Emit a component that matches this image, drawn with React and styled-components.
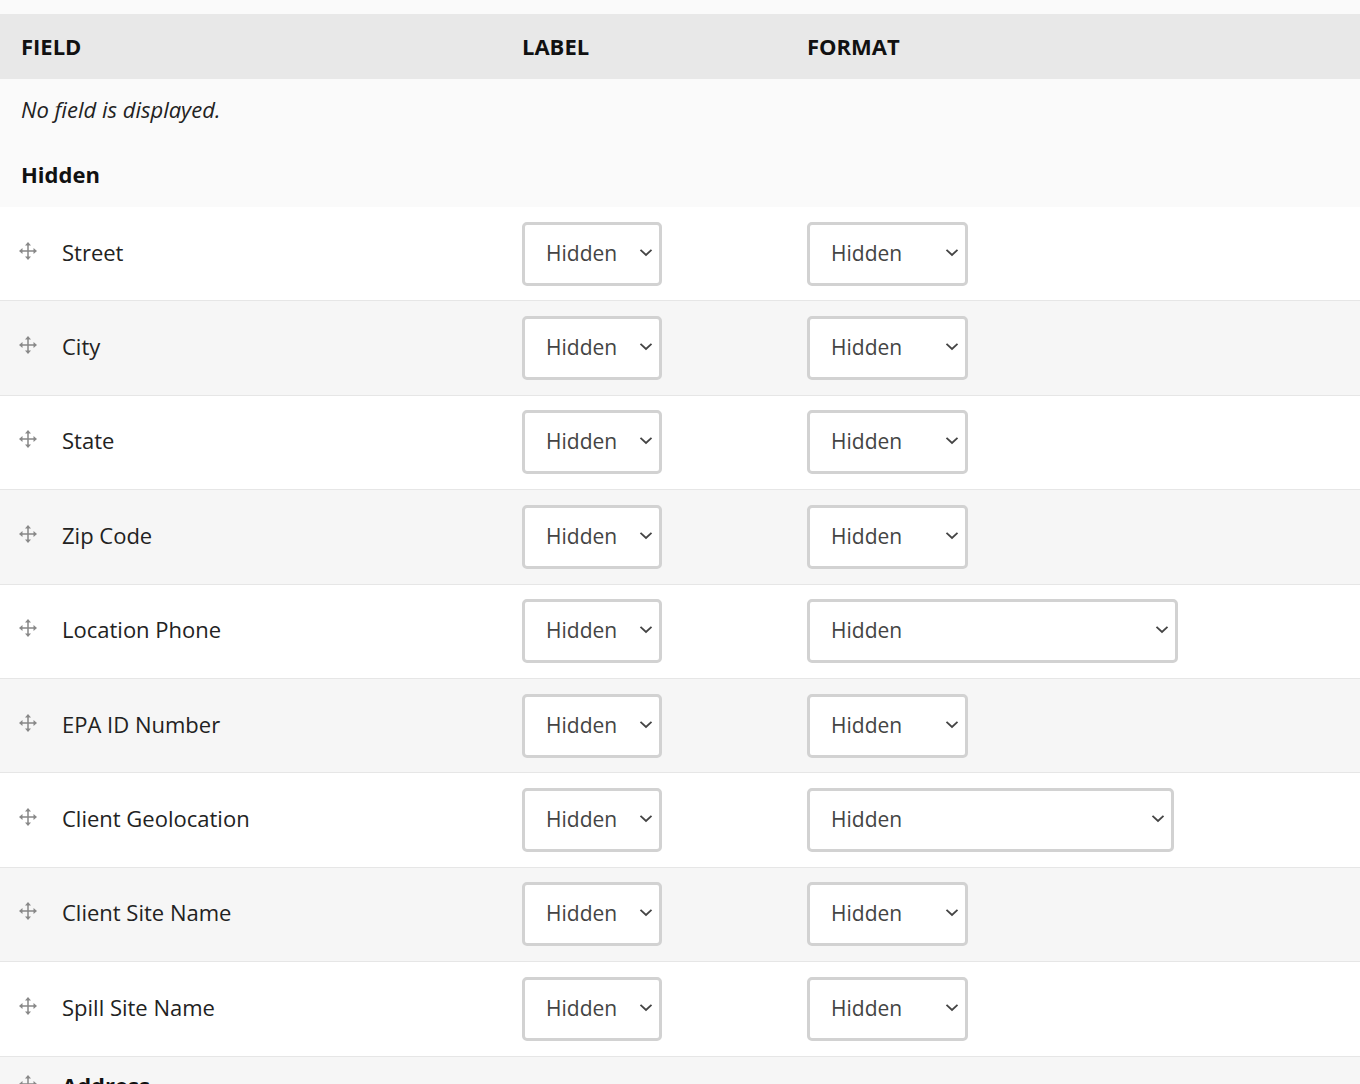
import React from "react";
import styled, { createGlobalStyle } from "styled-components";

const GlobalStyle = createGlobalStyle`
  html, body {
    margin: 0;
    padding: 0;
    background: #fafafa;
  }
  body {
    font-family: "Open Sans", "Noto Sans", sans-serif;
    color: #222;
  }
`;

const Page = styled.div`
  padding-top: 14px;
  height: 1084px;
  overflow: hidden;
  box-sizing: border-box;
`;

const Grid = styled.div`
  display: grid;
  grid-template-columns: 522px 285px 1fr;
`;

const HeaderRow = styled(Grid)`
  height: 65px;
  align-items: center;
  background: #e8e8e8;
`;

const HeaderCell = styled.div`
  font-size: 22px;
  font-weight: 700;
  color: #111;
  margin-top: -2px;
  padding-left: ${(p) => (p.first ? "21px" : "0")};
`;

const Region = styled.div`
  background: #fafafa;
  padding: 13px 21px 16px;
`;

const Empty = styled.div`
  font-size: 22px;
  font-style: italic;
  color: #222;
  line-height: 34px;
`;

const RegionTitle = styled.div`
  font-size: 22px;
  font-weight: 700;
  color: #111;
  line-height: 34px;
  margin-top: 31px;
`;

const Row = styled(Grid)`
  height: 94.4px;
  box-sizing: border-box;
  align-items: ${(p) => (p.group ? "start" : "center")};
  padding-top: ${(p) => (p.group ? "17px" : "0")};
  background: ${(p) => (p.striped ? "#f6f6f6" : "#fff")};
  border-bottom: 1px solid #e6e6e6;
`;

const FieldCell = styled.div`
  display: flex;
  align-items: center;
  gap: 25px;
  padding-left: 19px;
  font-size: 22px;
  line-height: 30px;
  font-weight: ${(p) => (p.bold ? 700 : 400)};
  color: ${(p) => (p.bold ? "#111" : "#222")};
  margin-top: -4px;
`;

const Handle = styled.svg`
  width: 18px;
  height: 18px;
  flex-shrink: 0;
  margin-top: -2px;
`;

const SelectWrap = styled.div`
  position: relative;
  width: ${(p) => p.width}px;
  height: 64px;
`;

const Select = styled.select`
  appearance: none;
  width: 100%;
  height: 100%;
  box-sizing: border-box;
  border: 3px solid #d2d2d2;
  border-radius: 5px;
  background: #fff;
  padding: 0 0 2px 21px;
  font-family: "Open Sans", "Noto Sans", sans-serif;
  font-size: 21px;
  color: #444;
  outline: none;
`;

const Chevron = styled.svg`
  position: absolute;
  right: 9px;
  top: 26px;
  width: 14px;
  height: 9px;
  pointer-events: none;
`;

function DragHandle() {
  return (
    <Handle viewBox="0 0 18 18" fill="#888">
      <rect x="8.25" y="2" width="1.5" height="14" />
      <rect x="2" y="8.25" width="14" height="1.5" />
      <path d="M9 0 L12 3.5 H6 Z" />
      <path d="M9 18 L12 14.5 H6 Z" />
      <path d="M0 9 L3.5 6 V12 Z" />
      <path d="M18 9 L14.5 6 V12 Z" />
    </Handle>
  );
}

function HiddenSelect({ width }) {
  return (
    <SelectWrap width={width}>
      <Select defaultValue="hidden">
        <option value="hidden">Hidden</option>
      </Select>
      <Chevron viewBox="0 0 14 9">
        <path d="M1.5 1.8 L7 7 L12.5 1.8" fill="none" stroke="#444" strokeWidth="1.8" />
      </Chevron>
    </SelectWrap>
  );
}

const fields = [
  { name: "Street", format: 161 },
  { name: "City", format: 161 },
  { name: "State", format: 161 },
  { name: "Zip Code", format: 161 },
  { name: "Location Phone", format: 371 },
  { name: "EPA ID Number", format: 161 },
  { name: "Client Geolocation", format: 367 },
  { name: "Client Site Name", format: 161 },
  { name: "Spill Site Name", format: 161 },
];

function App() {
  return (
    <Page>
      <GlobalStyle />
      <HeaderRow>
        <HeaderCell first>FIELD</HeaderCell>
        <HeaderCell>LABEL</HeaderCell>
        <HeaderCell>FORMAT</HeaderCell>
      </HeaderRow>
      <Region>
        <Empty>No field is displayed.</Empty>
        <RegionTitle>Hidden</RegionTitle>
      </Region>
      {fields.map((f, i) => (
        <Row key={f.name} striped={i % 2 === 1}>
          <FieldCell>
            <DragHandle />
            {f.name}
          </FieldCell>
          <div>
            <HiddenSelect width={140} />
          </div>
          <div>
            <HiddenSelect width={f.format} />
          </div>
        </Row>
      ))}
      <Row striped group>
        <FieldCell bold>
          <DragHandle />
          Address
        </FieldCell>
        <div />
        <div />
      </Row>
    </Page>
  );
}

export default App;
